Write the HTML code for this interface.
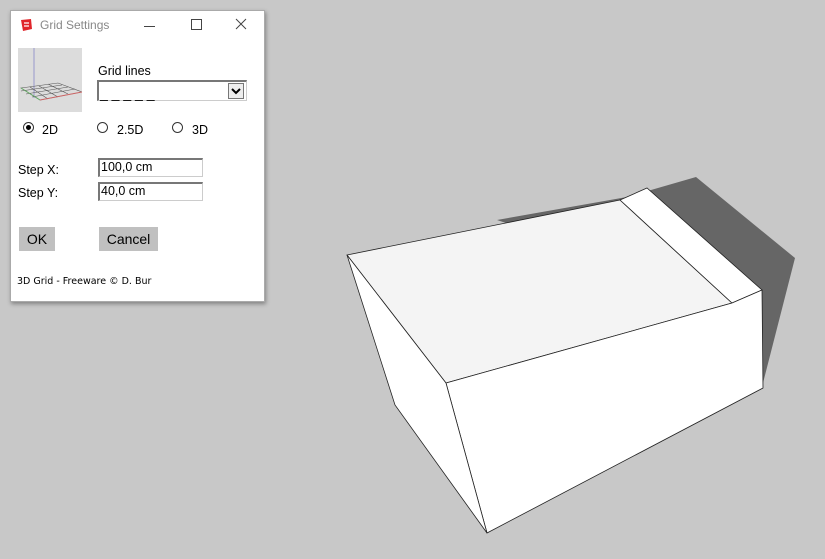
<!DOCTYPE html>
<html><head><meta charset="utf-8"><style>
body{margin:0;width:825px;height:559px;background:#c8c8c8;position:relative;overflow:hidden;font-family:"Liberation Sans",sans-serif;}
.dlg{position:absolute;left:10px;top:10px;width:253px;height:290px;background:#fff;border:1px solid #aaa;box-shadow:1px 2px 4px rgba(0,0,0,.35);}
.a{position:absolute;font-size:12.5px;color:#000;white-space:nowrap}
.inp{position:absolute;border:1px solid #ccc;border-top:2px solid #777;border-left:2px solid #777;background:#fff;font-size:12.5px;line-height:15px;padding-left:1px;box-sizing:border-box}
.btn{position:absolute;background:#c0c0c0;font-size:14px;text-align:center;line-height:24px}
.rad{position:absolute;width:11px;height:11px;border:1px solid #333;border-radius:50%;box-sizing:border-box}
</style></head><body>
<svg width="825" height="559" style="position:absolute;left:0;top:0">
<polygon points="497,220 627,197 696,177 795,258 763,383 740,300" fill="#666"/>
<polygon points="347,255 620,200 732,303 446,383" fill="#f4f4f4" stroke="#222" stroke-width="0.8"/>
<polygon points="620,200 647,188 762,290 732,303" fill="#fff" stroke="#222" stroke-width="0.8"/>
<polygon points="446,383 732,303 762,290 763,388 487,533" fill="#fff" stroke="#222" stroke-width="0.8"/>
<polygon points="347,255 446,383 487,533 395,405" fill="#fff" stroke="#222" stroke-width="0.8"/>
</svg>
<div class="dlg">
 <svg style="position:absolute;left:8px;top:7px" width="14" height="14"><path d="M2 2 L12 1 L13 11 L4 13 Z" fill="#e0262b"/><path d="M5 5h5M5 8h5" stroke="#fff" stroke-width="1.3"/></svg>
 <div class="a" style="left:29px;top:7px;color:#888;font-size:12px">Grid Settings</div>
 <div style="position:absolute;left:133px;top:15px;width:11px;height:1px;background:#444"></div>
 <div style="position:absolute;left:180px;top:8px;width:9px;height:9px;border:1px solid #444"></div>
 <svg style="position:absolute;left:224px;top:7px" width="12" height="12"><path d="M1 1L11 11M11 1L1 11" stroke="#444"/></svg>
 <svg style="position:absolute;left:7px;top:37px" width="64" height="64"><rect width="64" height="64" fill="#dcdcdc"/><line x1="16" y1="0" x2="16" y2="50" stroke="#99c"/>
 <g stroke="#555" stroke-width="0.6"><path d="M3 40L40 35L64 44L22 52Z" fill="none"/><path d="M12 39L30 51M21 38L40 49M30 36L50 46M3 43L44 37M8 46L50 39M14 49L57 41"/></g><path d="M3 40L22 52" stroke="#6a6"/><path d="M22 52L64 44" stroke="#c66"/></svg>
 <div class="a" style="left:87px;top:53px">Grid lines</div>
 <div class="inp" style="left:86px;top:69px;width:150px;height:21px;font-size:14px;line-height:22px">_ _ _ _ _</div>
 <div style="position:absolute;left:217px;top:72px;width:16px;height:16px;border:1px solid #777;background:#eee;box-sizing:border-box"><svg width="14" height="14"><path d="M3 5L7 9L11 5" stroke="#000" stroke-width="2" fill="none"/></svg></div>
 <div class="rad" style="left:12px;top:111px"><div style="position:absolute;left:2px;top:2px;width:5px;height:5px;border-radius:50%;background:#000"></div></div>
 <div class="a" style="left:31px;top:112px">2D</div>
 <div class="rad" style="left:86px;top:111px"></div>
 <div class="a" style="left:106px;top:112px">2.5D</div>
 <div class="rad" style="left:161px;top:111px"></div>
 <div class="a" style="left:181px;top:112px">3D</div>
 <div class="a" style="left:7px;top:152px">Step X:</div>
 <div class="inp" style="left:87px;top:147px;width:105px;height:19px">100,0 cm</div>
 <div class="a" style="left:7px;top:175px">Step Y:</div>
 <div class="inp" style="left:87px;top:171px;width:105px;height:19px">40,0 cm</div>
 <div class="btn" style="left:8px;top:216px;width:36px;height:24px">OK</div>
 <div class="btn" style="left:88px;top:216px;width:59px;height:24px">Cancel</div>
 <div class="a" style="left:6px;top:265px;font-family:'DejaVu Sans',sans-serif;font-size:9.5px">3D Grid - Freeware © D. Bur</div>
</div>
</body></html>
